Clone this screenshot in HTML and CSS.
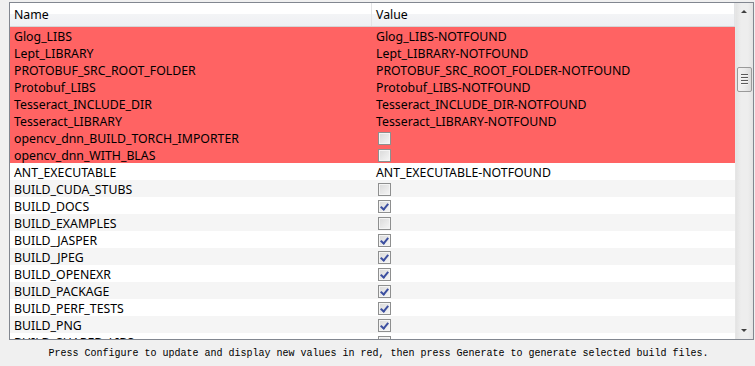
FILE: index.html
```html
<!DOCTYPE html>
<html lang="en">

<head>
    <meta charset="UTF-8">
    <title>CMake</title>
    <link rel="stylesheet" href="styles.css">
</head>

<body>
    <div class="frame">
        <div class="table">
            <div class="header">
                <div class="cell name">Name</div>
                <div class="cell value">Value</div>
            </div>
            <div class="rows">
                <div class="row new"><div class="cell name">Glog_LIBS</div><div class="cell value">Glog_LIBS-NOTFOUND</div></div>
                <div class="row new"><div class="cell name">Lept_LIBRARY</div><div class="cell value">Lept_LIBRARY-NOTFOUND</div></div>
                <div class="row new"><div class="cell name">PROTOBUF_SRC_ROOT_FOLDER</div><div class="cell value">PROTOBUF_SRC_ROOT_FOLDER-NOTFOUND</div></div>
                <div class="row new"><div class="cell name">Protobuf_LIBS</div><div class="cell value">Protobuf_LIBS-NOTFOUND</div></div>
                <div class="row new"><div class="cell name">Tesseract_INCLUDE_DIR</div><div class="cell value">Tesseract_INCLUDE_DIR-NOTFOUND</div></div>
                <div class="row new"><div class="cell name">Tesseract_LIBRARY</div><div class="cell value">Tesseract_LIBRARY-NOTFOUND</div></div>
                <div class="row new"><div class="cell name">opencv_dnn_BUILD_TORCH_IMPORTER</div><div class="cell value"><span class="check"></span></div></div>
                <div class="row new"><div class="cell name">opencv_dnn_WITH_BLAS</div><div class="cell value"><span class="check"></span></div></div>
                <div class="row"><div class="cell name">ANT_EXECUTABLE</div><div class="cell value">ANT_EXECUTABLE-NOTFOUND</div></div>
                <div class="row alt"><div class="cell name">BUILD_CUDA_STUBS</div><div class="cell value"><span class="check"></span></div></div>
                <div class="row"><div class="cell name">BUILD_DOCS</div><div class="cell value"><span class="check on"></span></div></div>
                <div class="row alt"><div class="cell name">BUILD_EXAMPLES</div><div class="cell value"><span class="check"></span></div></div>
                <div class="row"><div class="cell name">BUILD_JASPER</div><div class="cell value"><span class="check on"></span></div></div>
                <div class="row alt"><div class="cell name">BUILD_JPEG</div><div class="cell value"><span class="check on"></span></div></div>
                <div class="row"><div class="cell name">BUILD_OPENEXR</div><div class="cell value"><span class="check on"></span></div></div>
                <div class="row alt"><div class="cell name">BUILD_PACKAGE</div><div class="cell value"><span class="check on"></span></div></div>
                <div class="row"><div class="cell name">BUILD_PERF_TESTS</div><div class="cell value"><span class="check on"></span></div></div>
                <div class="row alt"><div class="cell name">BUILD_PNG</div><div class="cell value"><span class="check on"></span></div></div>
                <div class="row"><div class="cell name">BUILD_SHARED_LIBS</div><div class="cell value"><span class="check on"></span></div></div>
            </div>
        </div>
        <div class="scrollbar">
            <div class="arrow up"></div>
            <div class="track">
                <div class="thumb">
                    <span></span><span></span><span></span><span></span>
                </div>
            </div>
            <div class="arrow down"></div>
        </div>
    </div>

    <div class="status">Press Configure to update and display new values in red, then press Generate to generate selected build files.</div>
</body>

</html>
```

FILE: styles.css
```css
body {
    margin: 0;
    padding: 2px 1px 0 9px;
    background: #f0f0f0;
    font-family: "Noto Sans", "Open Sans", sans-serif;
    font-size: 12.3px;
    color: #000;
}

.frame {
    display: flex;
    height: 336px;
    border: 1px solid #828790;
    background: #fff;
}

.table {
    flex: 1;
    overflow: hidden;
}

.header {
    display: flex;
    height: 23px;
    border-bottom: 1px solid #d5d5d5;
    background: linear-gradient(#ffffff, #ffffff 50%, #f3f4f6 50%, #eef0f3);
}

.header .cell {
    line-height: 23px;
}

.header .name {
    border-right: 1px solid #e3e4e6;
}

.header .value {
    border-right: 1px solid #e3e4e6;
}

.rows {
    display: flex;
    flex-direction: column;
}

.row {
    display: flex;
    height: 17px;
    flex-shrink: 0;
    background: #fff;
}

.row.alt {
    background: #f5f5f5;
}

.row.new {
    background: #ff6363;
}

.cell {
    box-sizing: border-box;
    line-height: 17px;
    white-space: nowrap;
    overflow: hidden;
}

.row .cell {
    height: 17px;
    padding-top: 1px;
}

.cell.name {
    width: 362px;
    flex-shrink: 0;
    padding-left: 4px;
}

.cell.value {
    flex: 1;
    padding-left: 4px;
}

.check {
    display: inline-block;
    width: 11px;
    height: 11px;
    margin: 2px 0 0 2px;
    vertical-align: top;
    border: 1px solid #8e8f8f;
    background: linear-gradient(135deg, #d9d9d9, #f6f6f6);
    box-shadow: inset 0 0 0 1px #f4f4f4;
    position: relative;
}

.check.on::after {
    content: "";
    position: absolute;
    left: 3px;
    top: 1px;
    width: 3px;
    height: 6px;
    border: solid #3c4fa0;
    border-width: 0 2px 2px 0;
    transform: rotate(40deg);
}

.scrollbar {
    width: 17px;
    display: flex;
    flex-direction: column;
    background: linear-gradient(90deg, #e3e3e3, #eeeeee 30%, #eeeeee 70%, #e3e3e3);
    border-left: 1px solid #e6e6e6;
}

.arrow {
    height: 17px;
    position: relative;
}

.arrow::after {
    content: "";
    position: absolute;
    left: 5px;
    border-left: 3px solid transparent;
    border-right: 3px solid transparent;
}

.arrow.up::after {
    top: 7px;
    border-bottom: 3px solid #404040;
}

.arrow.down::after {
    top: 7px;
    border-top: 3px solid #404040;
}

.track {
    flex: 1;
    padding-top: 47px;
}

.thumb {
    height: 23px;
    margin: 0 1px;
    border: 1px solid #9a9a9a;
    border-radius: 2px;
    background: linear-gradient(90deg, #f2f2f2, #ebebeb 50%, #dcdcdc);
    display: flex;
    flex-direction: column;
    align-items: center;
    justify-content: center;
    gap: 1px;
}

.thumb span {
    width: 7px;
    height: 1px;
    background: #5a5a5a;
    border-bottom: 1px solid #f5f5f5;
}

.status {
    margin-left: -6px;
    padding-top: 7px;
    text-align: center;
    font-family: "Liberation Mono", monospace;
    font-size: 10px;
    line-height: 13px;
}
```
